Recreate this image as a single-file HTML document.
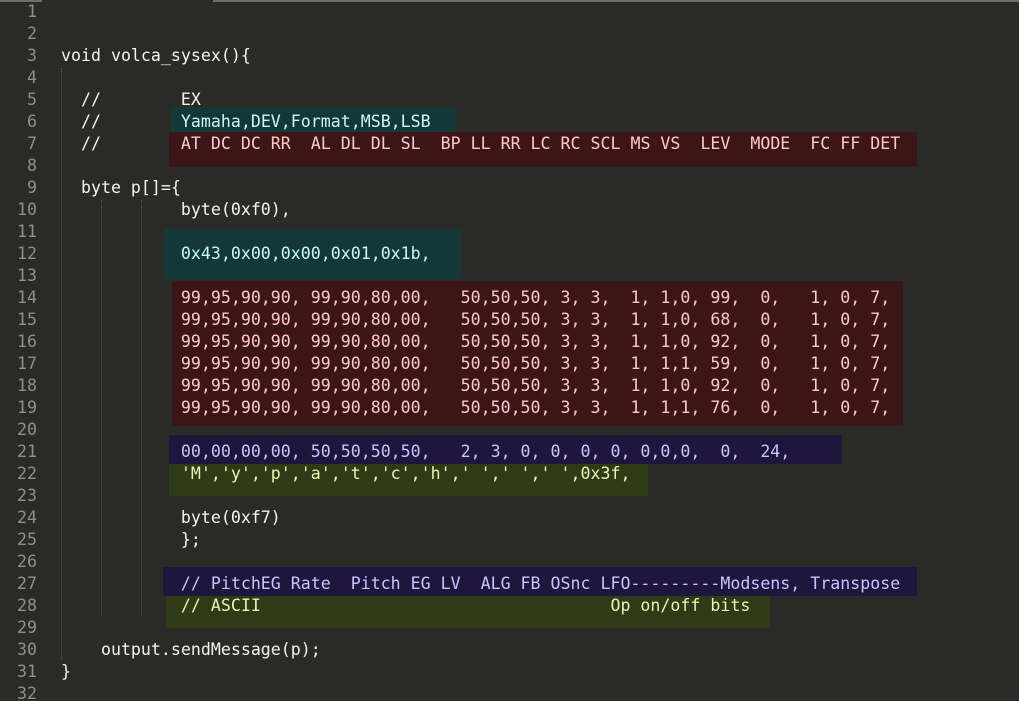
<!DOCTYPE html>
<html><head><meta charset="utf-8"><style>
html,body{margin:0;padding:0;width:1019px;height:701px;overflow:hidden;background:#2a2b26;}
body{position:relative;font-family:"DejaVu Sans Mono","Liberation Mono",monospace;font-size:16.6px;}
.l{position:absolute;left:61px;height:22px;line-height:22px;white-space:pre;color:#f4f4ee;margin-top:1px;}
.n{position:absolute;left:0;width:37px;text-align:right;height:22px;line-height:22px;color:#8f908a;margin-top:1px;}
.b{position:absolute;}
.g{position:absolute;width:0;border-left:1px dotted #55564f;}
.r{color:#ffc8c8}.t{color:#c8fafa}.u{color:#c8c4ff}.v{color:#e6f5b0}
</style></head><body>
<div class="b" style="left:0;top:0;width:42px;height:2px;background:#6e6e6a"></div>
<div class="b" style="left:213px;top:0;width:806px;height:2px;background:#6e6e6a"></div>

<div class="b" style="left:171px;top:107px;width:285px;height:25px;background:#143838"></div>
<div class="b" style="left:169px;top:132px;width:748px;height:35px;background:#3c1616"></div>
<div class="b" style="left:164px;top:229px;width:297px;height:50px;background:#143838"></div>
<div class="b" style="left:172px;top:281px;width:731px;height:145px;background:#3c1616"></div>
<div class="b" style="left:169px;top:435px;width:673px;height:29px;background:#1f163e"></div>
<div class="b" style="left:169px;top:464px;width:479px;height:32px;background:#2f3a16"></div>
<div class="b" style="left:163px;top:567px;width:754px;height:29px;background:#1f163e"></div>
<div class="b" style="left:166px;top:596px;width:604px;height:32px;background:#2f3a16"></div>

<div class="g" style="left:61px;top:68px;height:592px"></div>
<div class="g" style="left:101px;top:200px;height:416px"></div>
<div class="g" style="left:141px;top:200px;height:416px"></div>

<div class="n" style="top:0">1</div><div class="n" style="top:22px">2</div><div class="n" style="top:44px">3</div><div class="n" style="top:66px">4</div><div class="n" style="top:88px">5</div><div class="n" style="top:110px">6</div><div class="n" style="top:132px">7</div><div class="n" style="top:154px">8</div><div class="n" style="top:176px">9</div><div class="n" style="top:198px">10</div><div class="n" style="top:220px">11</div><div class="n" style="top:242px">12</div><div class="n" style="top:264px">13</div><div class="n" style="top:286px">14</div><div class="n" style="top:308px">15</div><div class="n" style="top:330px">16</div><div class="n" style="top:352px">17</div><div class="n" style="top:374px">18</div><div class="n" style="top:396px">19</div><div class="n" style="top:418px">20</div><div class="n" style="top:440px">21</div><div class="n" style="top:462px">22</div><div class="n" style="top:484px">23</div><div class="n" style="top:506px">24</div><div class="n" style="top:528px">25</div><div class="n" style="top:550px">26</div><div class="n" style="top:572px">27</div><div class="n" style="top:594px">28</div><div class="n" style="top:616px">29</div><div class="n" style="top:638px">30</div><div class="n" style="top:660px">31</div><div class="n" style="top:682px">32</div>

<div class="l" style="top:44px">void volca_sysex(){</div>
<div class="l" style="top:88px">  //        EX</div>
<div class="l" style="top:110px">  //        <span class="t">Yamaha,DEV,Format,MSB,LSB</span></div>
<div class="l" style="top:132px">  //        <span class="r">AT DC DC RR  AL DL DL SL  BP LL RR LC RC SCL MS VS  LEV  MODE  FC FF DET</span></div>
<div class="l" style="top:176px">  byte p[]={</div>
<div class="l" style="top:198px">            byte(0xf0),</div>
<div class="l t" style="top:242px">            0x43,0x00,0x00,0x01,0x1b,</div>
<div class="l r" style="top:286px">            99,95,90,90, 99,90,80,00,   50,50,50, 3, 3,  1, 1,0, 99,  0,   1, 0, 7,</div>
<div class="l r" style="top:308px">            99,95,90,90, 99,90,80,00,   50,50,50, 3, 3,  1, 1,0, 68,  0,   1, 0, 7,</div>
<div class="l r" style="top:330px">            99,95,90,90, 99,90,80,00,   50,50,50, 3, 3,  1, 1,0, 92,  0,   1, 0, 7,</div>
<div class="l r" style="top:352px">            99,95,90,90, 99,90,80,00,   50,50,50, 3, 3,  1, 1,1, 59,  0,   1, 0, 7,</div>
<div class="l r" style="top:374px">            99,95,90,90, 99,90,80,00,   50,50,50, 3, 3,  1, 1,0, 92,  0,   1, 0, 7,</div>
<div class="l r" style="top:396px">            99,95,90,90, 99,90,80,00,   50,50,50, 3, 3,  1, 1,1, 76,  0,   1, 0, 7,</div>
<div class="l u" style="top:440px">            00,00,00,00, 50,50,50,50,   2, 3, 0, 0, 0, 0, 0,0,0,  0,  24,</div>
<div class="l v" style="top:462px">            'M','y','p','a','t','c','h',' ',' ',' ',0x3f,</div>
<div class="l" style="top:506px">            byte(0xf7)</div>
<div class="l" style="top:528px">            };</div>
<div class="l u" style="top:572px">            // PitchEG Rate  Pitch EG LV  ALG FB OSnc LFO---------Modsens, Transpose</div>
<div class="l v" style="top:594px">            // ASCII                                   Op on/off bits</div>
<div class="l" style="top:638px">    output.sendMessage(p);</div>
<div class="l" style="top:660px">}</div>
</body></html>
